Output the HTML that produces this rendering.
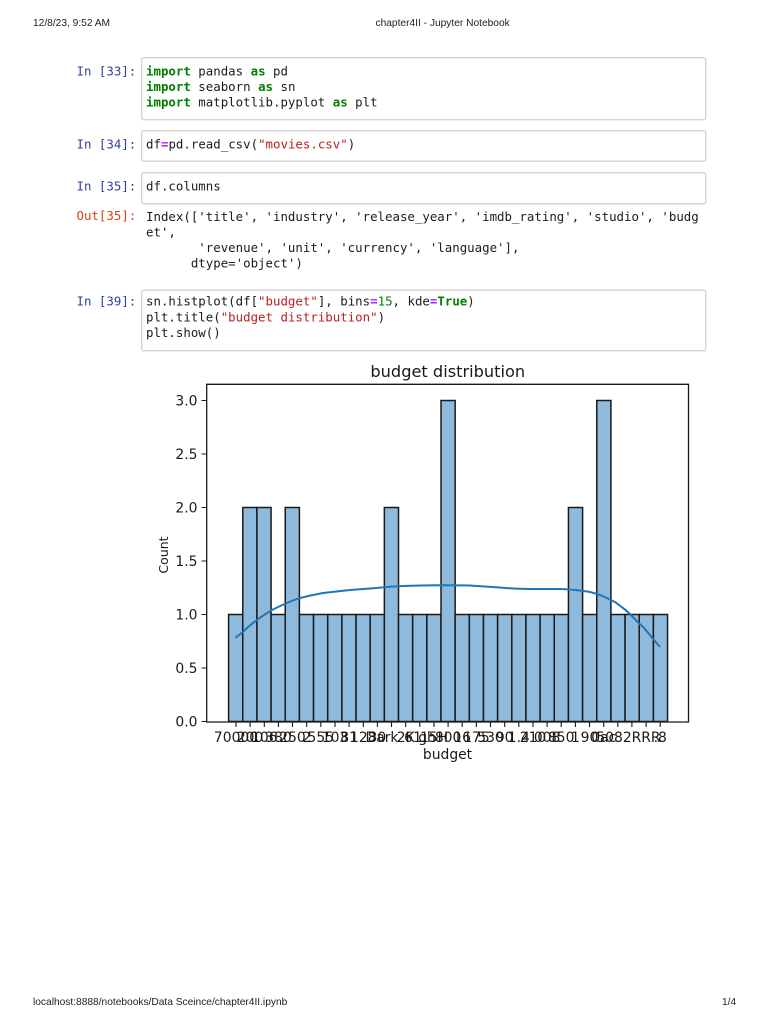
<!DOCTYPE html>
<html><head><meta charset="utf-8"><title>chapter4II - Jupyter Notebook</title>
<style>
html,body{margin:0;padding:0;background:#fff}
body{width:768px;height:1024px;position:relative;overflow:hidden}
svg{position:absolute;left:0;top:0;filter:blur(.3px)}
.c{fill:none;stroke:#d4d4d4;stroke-width:1.4}
.m{font-family:"DejaVu Sans Mono","Liberation Mono",monospace;font-size:12.41px;fill:#1c1c1c;white-space:pre}
.p{fill:#303f9f}.o{fill:#d84315}
.k{fill:#008000;font-weight:bold}.s{fill:#ba2121}.e{fill:#aa22ff;font-weight:bold}.n{fill:#008000}
.h{font-family:"Liberation Sans",sans-serif;font-size:10.2px;fill:#222}
.t{font-family:"DejaVu Sans",sans-serif;font-size:13.9px;fill:#1a1a1a}
.b{fill:#8fbadb;stroke:#1a1a1a;stroke-width:1.5}
</style></head><body>
<svg width="768" height="1024" viewBox="0 0 768 1024" xmlns="http://www.w3.org/2000/svg">
<text class="h" x="33" y="26">12/8/23, 9:52 AM</text>
<text class="h" x="375.500" y="26">chapter4II - Jupyter Notebook</text>
<text class="h" x="33" y="1005">localhost:8888/notebooks/Data Sceince/chapter4II.ipynb</text>
<text class="h" x="722" y="1005">1/4</text>

<rect class="c" x="141.700" y="57.700" width="564" height="62" rx="2"/>
<rect class="c" x="141.700" y="130.700" width="564" height="30.500" rx="2"/>
<rect class="c" x="141.700" y="172.700" width="564" height="31" rx="2"/>
<rect class="c" x="141.700" y="290.200" width="564" height="60.500" rx="2"/>

<text class="m p" x="76.500" y="75.500">In [33]:</text>
<text class="m" x="146" y="75.500"><tspan class="k">import</tspan> pandas <tspan class="k">as</tspan> pd</text>
<text class="m" x="146" y="91"><tspan class="k">import</tspan> seaborn <tspan class="k">as</tspan> sn</text>
<text class="m" x="146" y="106.500"><tspan class="k">import</tspan> matplotlib.pyplot <tspan class="k">as</tspan> plt</text>

<text class="m p" x="76.500" y="148.500">In [34]:</text>
<text class="m" x="146" y="148.500">df<tspan class="e">=</tspan>pd.read_csv(<tspan class="s">"movies.csv"</tspan>)</text>

<text class="m p" x="76.500" y="190.500">In [35]:</text>
<text class="m" x="146" y="190.500">df.columns</text>

<text class="m o" x="76.500" y="220">Out[35]:</text>
<text class="m" x="146" y="221">Index(['title', 'industry', 'release_year', 'imdb_rating', 'studio', 'budg</text>
<text class="m" x="146" y="236.500">et',</text>
<text class="m" x="146" y="252">       'revenue', 'unit', 'currency', 'language'],</text>
<text class="m" x="146" y="267.500">      dtype='object')</text>

<text class="m p" x="76.500" y="305.500">In [39]:</text>
<text class="m" x="146" y="305.500">sn.histplot(df[<tspan class="s">"budget"</tspan>], bins<tspan class="e">=</tspan><tspan class="n">15</tspan>, kde<tspan class="e">=</tspan><tspan class="k">True</tspan>)</text>
<text class="m" x="146" y="321.500">plt.title(<tspan class="s">"budget distribution"</tspan>)</text>
<text class="m" x="146" y="337">plt.show()</text>

<!-- chart -->
<text class="t" x="447.800" y="377" text-anchor="middle" style="font-size:16.2px">budget distribution</text>
<g>
<rect class="b" x="228.600" y="614.500" width="14.160" height="107"/>
<rect class="b" x="242.760" y="507.500" width="14.160" height="214"/>
<rect class="b" x="256.920" y="507.500" width="14.160" height="214"/>
<rect class="b" x="271.080" y="614.500" width="14.160" height="107"/>
<rect class="b" x="285.240" y="507.500" width="14.160" height="214"/>
<rect class="b" x="299.400" y="614.500" width="14.160" height="107"/>
<rect class="b" x="313.560" y="614.500" width="14.160" height="107"/>
<rect class="b" x="327.720" y="614.500" width="14.160" height="107"/>
<rect class="b" x="341.880" y="614.500" width="14.160" height="107"/>
<rect class="b" x="356.040" y="614.500" width="14.160" height="107"/>
<rect class="b" x="370.200" y="614.500" width="14.160" height="107"/>
<rect class="b" x="384.360" y="507.500" width="14.160" height="214"/>
<rect class="b" x="398.520" y="614.500" width="14.160" height="107"/>
<rect class="b" x="412.680" y="614.500" width="14.160" height="107"/>
<rect class="b" x="426.840" y="614.500" width="14.160" height="107"/>
<rect class="b" x="441" y="400.500" width="14.160" height="321"/>
<rect class="b" x="455.160" y="614.500" width="14.160" height="107"/>
<rect class="b" x="469.320" y="614.500" width="14.160" height="107"/>
<rect class="b" x="483.480" y="614.500" width="14.160" height="107"/>
<rect class="b" x="497.640" y="614.500" width="14.160" height="107"/>
<rect class="b" x="511.800" y="614.500" width="14.160" height="107"/>
<rect class="b" x="525.960" y="614.500" width="14.160" height="107"/>
<rect class="b" x="540.120" y="614.500" width="14.160" height="107"/>
<rect class="b" x="554.280" y="614.500" width="14.160" height="107"/>
<rect class="b" x="568.440" y="507.500" width="14.160" height="214"/>
<rect class="b" x="582.600" y="614.500" width="14.160" height="107"/>
<rect class="b" x="596.760" y="400.500" width="14.160" height="321"/>
<rect class="b" x="610.920" y="614.500" width="14.160" height="107"/>
<rect class="b" x="625.080" y="614.500" width="14.160" height="107"/>
<rect class="b" x="639.240" y="614.500" width="14.160" height="107"/>
<rect class="b" x="653.400" y="614.500" width="14.160" height="107"/>
</g>
<path d="M235.500 638 C238 635.500 242 633 245 630 C249 626 253 623 257 620 C262 616 267 613 272 610 C277 607.500 282 605 287 603 C291 601 296 599.500 300 598 C308 596 315 594.500 323 593 C332 592 341 591 350 590 C363 589 376 588 390 586.700 C407 585.800 424 585.300 440 585.300 C450 585.300 460 585.300 470 585.500 C480 586.200 490 587 500 587.500 C510 588.500 520 589 530 589 C540 589 550 589 560 589 C565 589 570 589.500 575 590 C580 590.500 585 591 590 592 C594 593 597 594 600 595 C605 597 610 599.500 615 602 C618 604 620 606 623 608 C630 613 636 621 643 627 C649 633 654 641 660 646.700" fill="none" stroke="#2176b4" stroke-width="2"/>
<path d="M206.700 722V384.300H688.500V722Z" fill="none" stroke="#1a1a1a" stroke-width="1.300"/>
<path d="M201.500 721.500H206.500M201.500 668H206.500M201.500 614.500H206.500M201.500 561H206.500M201.500 507.500H206.500M201.500 454H206.500M201.500 400.500H206.500" stroke="#1a1a1a" stroke-width="1.100"/>
<g class="t" text-anchor="end">
<text x="197.500" y="726.500">0.0</text>
<text x="197.500" y="673">0.5</text>
<text x="197.500" y="619.500">1.0</text>
<text x="197.500" y="566">1.5</text>
<text x="197.500" y="512.500">2.0</text>
<text x="197.500" y="459">2.5</text>
<text x="197.500" y="405.500">3.0</text>
</g>
<path d="M236 722v5M250.100 722v5M264.300 722v5M278.400 722v5M292.500 722v5M306.700 722v5M320.800 722v5M335 722v5M349.100 722v5M363.300 722v5M377.400 722v5M391.500 722v5M405.700 722v5M419.800 722v5M434 722v5M448.100 722v5M462.200 722v5M476.400 722v5M490.500 722v5M504.700 722v5M518.800 722v5M533 722v5M547.100 722v5M561.200 722v5M575.400 722v5M589.500 722v5M603.700 722v5M617.800 722v5M631.900 722v5M646.100 722v5M660.200 722v5" stroke="#1a1a1a" stroke-width="1.100"/>
<g class="t" text-anchor="middle">
<text x="236" y="742">70000</text>
<text x="250.100" y="742">200</text>
<text x="264.300" y="742">106</text>
<text x="278.400" y="742">380</text>
<text x="292.500" y="742">250</text>
<text x="306.700" y="742">2</text>
<text x="320.800" y="742">555</text>
<text x="335" y="742">103</text>
<text x="349.100" y="742">81</text>
<text x="363.300" y="742">128</text>
<text x="377.400" y="742">30</text>
<text x="382" y="742">Dark</text>
<text x="405.700" y="742">2K</text>
<text x="413" y="742">61</text>
<text x="427" y="742">gh</text>
<text x="434" y="742">15H</text>
<text x="448.100" y="742">800</text>
<text x="462.200" y="742">16</text>
<text x="476.400" y="742">175</text>
<text x="490.500" y="742">530</text>
<text x="504.700" y="742">90</text>
<text x="518.800" y="742">1.4</text>
<text x="533" y="742">210</text>
<text x="547.100" y="742">008</text>
<text x="561.200" y="742">850</text>
<text x="575.400" y="742">1</text>
<text x="589.500" y="742">90</text>
<text x="603.700" y="742">0ac</text>
<text x="614" y="742">5082</text>
<text x="646.100" y="742">RRR</text>
<text x="660.200" y="742">.8</text>
</g>
<text class="t" x="447.500" y="759" text-anchor="middle">budget</text>
<text class="t" x="0" y="0" text-anchor="middle" transform="translate(168 555) rotate(-90)" style="font-size:12.5px">Count</text>
</svg>
</body></html>
